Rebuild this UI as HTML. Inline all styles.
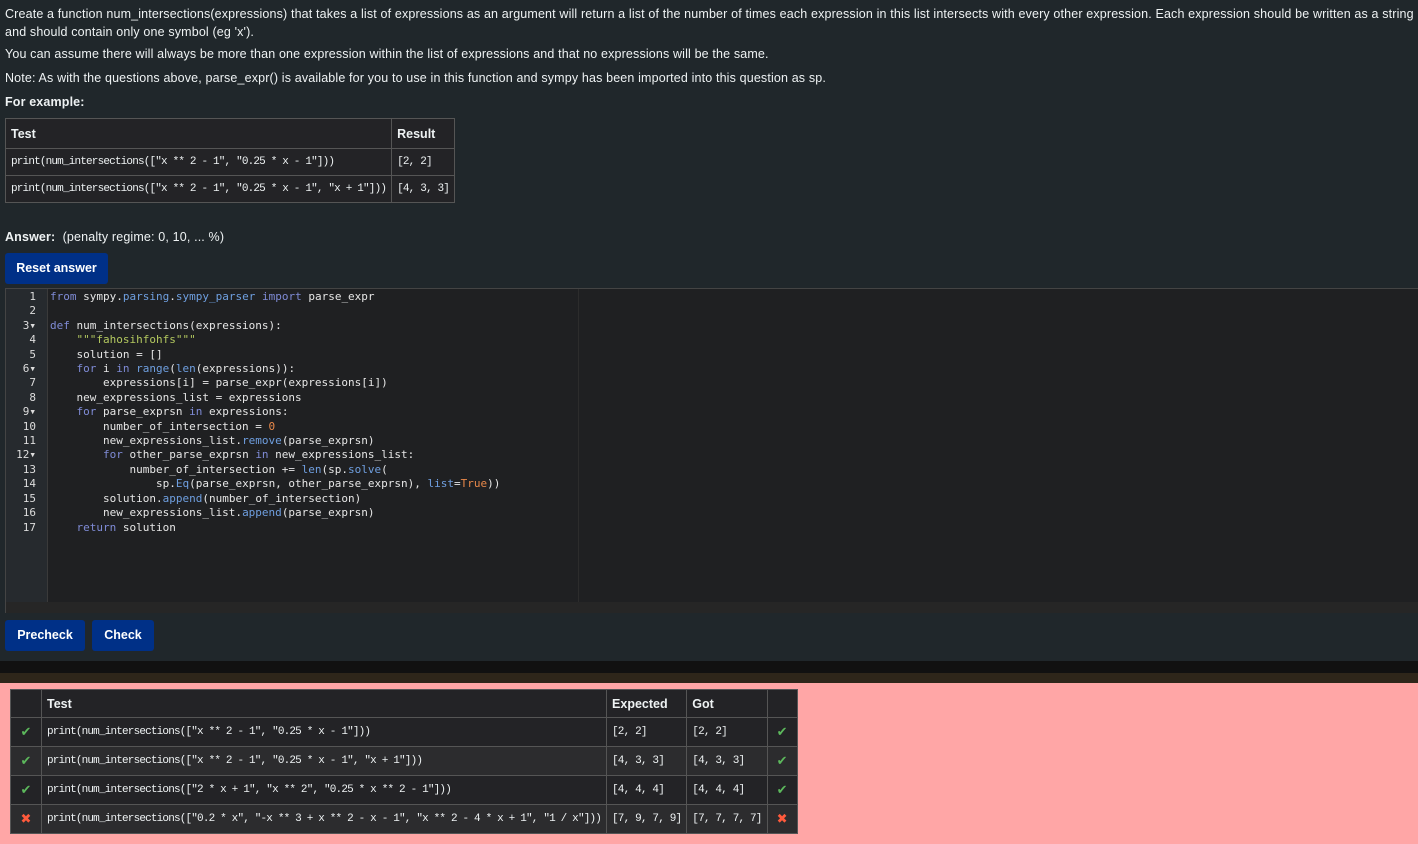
<!DOCTYPE html>
<html><head><meta charset="utf-8"><style>
*{box-sizing:border-box;margin:0;padding:0}
body{width:1418px;height:844px;overflow:hidden;background:#20272b;color:#eef2f3;font-family:"Liberation Sans",sans-serif;font-size:12.5px;position:relative}
.p{position:absolute;left:5px;white-space:nowrap;letter-spacing:0.15px}
table{border-collapse:collapse}
td,th{white-space:nowrap}
.ex{position:absolute;left:5px;top:118px;background:#232326}
.ex td,.ex th{border:1px solid #555;padding:0 5px;text-align:left;height:27px}
.ex th{height:30px;font-size:12.5px}
.m{font-family:"Liberation Mono",monospace;font-size:11px;letter-spacing:-0.83px}
.btn{position:absolute;background:#003087;color:#fff;font-weight:bold;font-size:12.5px;border-radius:3px;height:31px;line-height:31px;text-align:center}
.ed{position:absolute;left:5px;top:288px;width:1413px;height:325px;background:#1f2022;border:1px solid #444;border-right:none}
.gut{position:absolute;left:0;top:0;width:42px;height:313px;background:#262a2e;border-right:1px solid #3a3a3a}
.code{position:absolute;left:0;top:1px;font-family:"DejaVu Sans Mono",monospace;font-size:11px;line-height:14.4px;white-space:pre;color:#e6e6e6}
.ln{display:inline-block;width:30px;text-align:right;color:#ddd;margin-right:14px}
.k{color:#7f8bd6}.s{color:#b3c85f}.n{color:#e8884a}.f{color:#6f9fe0}
.res td,.res th{border:1px solid #555;height:29px;padding:0 5px;text-align:left}
.res th{height:28px}
.res{position:absolute;left:10px;top:689px;background:#232326}
.res tr:nth-child(odd) td{background:#2c2c2e}
.ok{color:#5cb85c;font-size:13px;text-align:center!important}
.bad{color:#ff5a3c;font-size:13px;text-align:center!important}
</style></head><body>
<div class="p" style="top:5px;line-height:18px">Create a function num_intersections(expressions) that takes a list of expressions as an argument will return a list of the number of times each expression in this list intersects with every other expression. Each expression should be written as a string<br>and should contain only one symbol (eg 'x').</div>
<div class="p" style="top:47px">You can assume there will always be more than one expression within the list of expressions and that no expressions will be the same.</div>
<div class="p" style="top:71px">Note: As with the questions above, parse_expr() is available for you to use in this function and sympy has been imported into this question as sp.</div>
<div class="p" style="top:95px;font-weight:bold">For example:</div>
<table class="ex">
<tr><th style="width:386px">Test</th><th style="width:62px">Result</th></tr>
<tr><td class="m">print(num_intersections(["x ** 2 - 1", "0.25 * x - 1"]))</td><td class="m">[2, 2]</td></tr>
<tr><td class="m">print(num_intersections(["x ** 2 - 1", "0.25 * x - 1", "x + 1"]))</td><td class="m">[4, 3, 3]</td></tr>
</table>
<div class="p" style="top:230px"><b>Answer:</b>&nbsp; (penalty regime: 0, 10, ... %)</div>
<div class="btn" style="left:5px;top:253px;width:103px">Reset answer</div>
<div class="ed">
<div class="gut"></div>
<div style="position:absolute;left:572px;top:0;width:1px;height:313px;background:#2c2c2c"></div>
<div style="position:absolute;left:0;top:313px;width:100%;height:11px;background:#262626"></div>
<div class="code"><span class="ln">1</span><span class="k">from</span> sympy.<span class="f">parsing</span>.<span class="f">sympy_parser</span> <span class="k">import</span> parse_expr
<span class="ln">2</span>
<span class="ln">3▾</span><span class="k">def</span> num_intersections(expressions):
<span class="ln">4</span>    <span class="s">"""fahosihfohfs"""</span>
<span class="ln">5</span>    solution = []
<span class="ln">6▾</span>    <span class="k">for</span> i <span class="k">in</span> <span class="f">range</span>(<span class="f">len</span>(expressions)):
<span class="ln">7</span>        expressions[i] = parse_expr(expressions[i])
<span class="ln">8</span>    new_expressions_list = expressions
<span class="ln">9▾</span>    <span class="k">for</span> parse_exprsn <span class="k">in</span> expressions:
<span class="ln">10</span>        number_of_intersection = <span class="n">0</span>
<span class="ln">11</span>        new_expressions_list.<span class="f">remove</span>(parse_exprsn)
<span class="ln">12▾</span>        <span class="k">for</span> other_parse_exprsn <span class="k">in</span> new_expressions_list:
<span class="ln">13</span>            number_of_intersection += <span class="f">len</span>(sp.<span class="f">solve</span>(
<span class="ln">14</span>                sp.<span class="f">Eq</span>(parse_exprsn, other_parse_exprsn), <span class="f">list</span>=<span class="n">True</span>))
<span class="ln">15</span>        solution.<span class="f">append</span>(number_of_intersection)
<span class="ln">16</span>        new_expressions_list.<span class="f">append</span>(parse_exprsn)
<span class="ln">17</span>    <span class="k">return</span> solution</div>
</div>
<div class="btn" style="left:5px;top:620px;width:80px">Precheck</div>
<div class="btn" style="left:92px;top:620px;width:62px">Check</div>
<div style="position:absolute;left:0;top:661px;width:1418px;height:12px;background:#111"></div>
<div style="position:absolute;left:0;top:673px;width:1418px;height:10px;background:#2e261a"></div>
<div style="position:absolute;left:0;top:683px;width:1418px;height:161px;background:#ffa6a6"></div>
<table class="res">
<tr><th style="width:31px"></th><th style="width:565px">Test</th><th style="width:80px">Expected</th><th style="width:79px">Got</th><th style="width:30px"></th></tr>
<tr><td class="ok">✔</td><td class="m">print(num_intersections(["x ** 2 - 1", "0.25 * x - 1"]))</td><td class="m">[2, 2]</td><td class="m">[2, 2]</td><td class="ok">✔</td></tr>
<tr><td class="ok">✔</td><td class="m">print(num_intersections(["x ** 2 - 1", "0.25 * x - 1", "x + 1"]))</td><td class="m">[4, 3, 3]</td><td class="m">[4, 3, 3]</td><td class="ok">✔</td></tr>
<tr><td class="ok">✔</td><td class="m">print(num_intersections(["2 * x + 1", "x ** 2", "0.25 * x ** 2 - 1"]))</td><td class="m">[4, 4, 4]</td><td class="m">[4, 4, 4]</td><td class="ok">✔</td></tr>
<tr><td class="bad">✖</td><td class="m">print(num_intersections(["0.2 * x", "-x ** 3 + x ** 2 - x - 1", "x ** 2 - 4 * x + 1", "1 / x"]))</td><td class="m">[7, 9, 7, 9]</td><td class="m">[7, 7, 7, 7]</td><td class="bad">✖</td></tr>
</table>
</body></html>
